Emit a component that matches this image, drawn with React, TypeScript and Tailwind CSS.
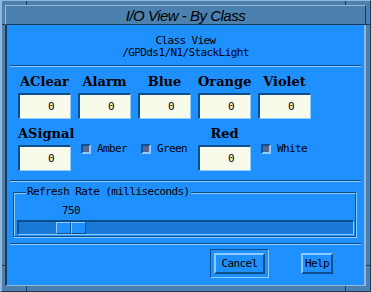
const MONO = "font-['DejaVu_Sans_Mono',monospace] text-[11px] tracking-[-0.6px]"

function Tick({ className }: { className: string }) {
  return <div className={`absolute bg-[#1b3a58] ${className}`} />
}

function Separator({ className = '' }: { className?: string }) {
  return <div className={`mx-[3px] h-[2px] border-t border-t-[#0c4f8f] border-b border-b-[#8ecbff] ${className}`} />
}

function Field({ label }: { label: string }) {
  return (
    <div className="flex flex-col">
      <div className="h-[16px] leading-[16px] text-center font-['DejaVu_Serif',serif] font-bold text-[13px] text-black">
        {label}
      </div>
      <div
        className={`mt-[3px] h-[26px] bg-[#f8fbe9] border-t-2 border-l-2 border-[#0c4f8f] border-b border-r border-b-[#8ecbff] border-r-[#8ecbff] pl-[28px] flex items-center leading-none text-black ${MONO}`}
      >
        0
      </div>
    </div>
  )
}

function Check({ label }: { label: string }) {
  return (
    <div className="mt-[18px] h-[10px] pl-[3px] flex items-center">
      <span className="w-[10px] h-[10px] flex-shrink-0 bg-[#5b6593] border-t-2 border-l-2 border-[#0c4f8f] border-b-2 border-r-2 border-b-[#8ecbff] border-r-[#8ecbff]" />
      <span className={`ml-[6px] leading-[12px] text-black ${MONO}`}>{label}</span>
    </div>
  )
}

export default function App() {
  return (
    <div className="relative w-[371px] h-[292px] bg-[#4b80af] border-l-2 border-t border-r border-b border-l-[#93b7d8] border-t-[#93b7d8] border-r-[#1b3a58] border-b-[#1b3a58] pl-[3px] pt-[4px] pr-[4px] pb-[5px] flex flex-col">
      {/* resize handle ticks */}
      <Tick className="left-[24px] top-0 w-[1px] h-[4px]" />
      <Tick className="left-[343px] top-0 w-[1px] h-[4px]" />
      <Tick className="left-[24px] bottom-0 w-[1px] h-[5px]" />
      <Tick className="left-[343px] bottom-0 w-[1px] h-[5px]" />
      <Tick className="left-0 top-[23px] w-[3px] h-[1px]" />
      <Tick className="right-0 top-[23px] w-[4px] h-[1px]" />
      <Tick className="left-0 top-[264px] w-[3px] h-[1px]" />
      <Tick className="right-0 top-[264px] w-[4px] h-[1px]" />

      {/* title bar */}
      <div className="h-[20px] flex items-center justify-center bg-[#4b80af] border-t border-l border-t-[#93b7d8] border-l-[#93b7d8] border-b border-r border-b-[#1b3a58] border-r-[#1b3a58]">
        <span className="font-['Liberation_Sans',Arial,sans-serif] italic text-[15px] tracking-[-0.5px] leading-none text-black">
          I/O View - By Class
        </span>
      </div>

      {/* client area */}
      <div className="flex-1 flex flex-col bg-[#1e90ff] border-l-2 border-l-[#1b3a58] border-r-2 border-r-[#93b7d8] border-b border-b-[#93b7d8] pt-[10px]">
        <div className={`text-center leading-[12px] text-black ${MONO}`}>
          <div>Class View</div>
          <div>/GPDds1/N1/StackLight</div>
        </div>

        <Separator className="mt-[6px]" />

        <div className="mt-[7px] pl-[11px] grid grid-cols-[repeat(5,53px)] gap-x-[7px] gap-y-[7px]">
          <Field label="AClear" />
          <Field label="Alarm" />
          <Field label="Blue" />
          <Field label="Orange" />
          <Field label="Violet" />
          <Field label="ASignal" />
          <Check label="Amber" />
          <Check label="Green" />
          <Field label="Red" />
          <Check label="White" />
        </div>

        <Separator className="mt-[9px]" />

        {/* refresh rate group */}
        <div className="relative mt-[10px] ml-[6px] mr-[7px] border-t border-l border-t-[#0c4f8f] border-l-[#0c4f8f] border-b border-r border-b-[#8ecbff] border-r-[#8ecbff]">
          <div className="border-t border-l border-t-[#8ecbff] border-l-[#8ecbff] border-b border-r border-b-[#0c4f8f] border-r-[#0c4f8f] pt-[11px] pb-[1px] pl-[2px] pr-[1px]">
            <div className={`ml-[45px] leading-[12px] text-black ${MONO}`}>750</div>
            <div className="mt-[3px] h-[15px] flex bg-[#1a78d6] border-t-2 border-l-2 border-t-[#0c4f8f] border-l-[#0c4f8f] border-b border-r border-b-[#8ecbff] border-r-[#8ecbff]">
              <div className="ml-[37px] flex">
                <div className="w-[15px] bg-[#1e90ff] border-t border-l border-t-[#8ecbff] border-l-[#8ecbff] border-b border-r border-b-[#0c4f8f] border-r-[#0c4f8f]" />
                <div className="w-[15px] bg-[#1e90ff] border-t border-l border-t-[#8ecbff] border-l-[#8ecbff] border-b border-r border-b-[#0c4f8f] border-r-[#0c4f8f]" />
              </div>
            </div>
          </div>
          <span className={`absolute left-[12px] top-[-7px] px-[1px] bg-[#1e90ff] leading-[12px] text-black ${MONO}`}>
            Refresh Rate (milliseconds)
          </span>
        </div>

        <Separator className="mt-[5px]" />

        {/* buttons */}
        <div className="mt-[4px] flex items-start">
          <div className="ml-[203px] w-[59px] h-[29px] p-[3px] border-t border-l border-t-[#0c4f8f] border-l-[#0c4f8f] border-b border-r border-b-[#8ecbff] border-r-[#8ecbff]">
            <div className={`h-[21px] flex items-center justify-center bg-[#1e90ff] border-2 border-t-[#8ecbff] border-l-[#8ecbff] border-b-[#0c4f8f] border-r-[#0c4f8f] leading-none text-black ${MONO}`}>
              Cancel
            </div>
          </div>
          <div className={`ml-[32px] mt-[4px] w-[32px] h-[21px] flex items-center justify-center bg-[#1e90ff] border-2 border-t-[#8ecbff] border-l-[#8ecbff] border-b-[#0c4f8f] border-r-[#0c4f8f] leading-none text-black ${MONO}`}>
            Help
          </div>
        </div>
      </div>
    </div>
  )
}
